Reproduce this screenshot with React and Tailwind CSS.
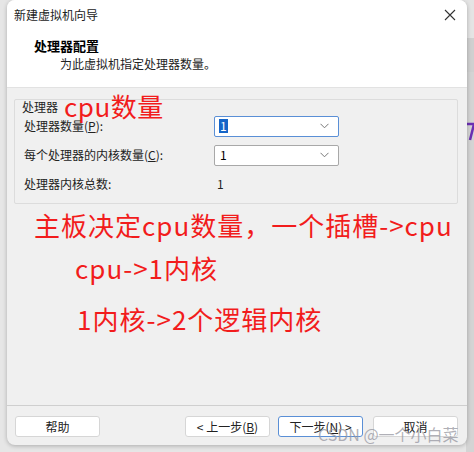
import React from "react";

const F = { fontFamily: '"Noto Sans CJK SC", "Noto Sans", sans-serif' };

function Chevron() {
  return (
    <svg width="9" height="6" viewBox="0 0 9 6" className="text-[#777]">
      <path d="M0.5 0.8 L4.5 4.8 L8.5 0.8" fill="none" stroke="currentColor" strokeWidth="1" />
    </svg>
  );
}

function Select({ focused }) {
  return (
    <div
      className={
        "flex items-center justify-between w-[125px] h-[21px] bg-white rounded-[2px] pl-[4px] pr-[9px] border " +
        (focused ? "border-[#5a8fd6]" : "border-[#a8a8a8]")
      }
    >
      {focused ? (
        <span className="bg-[#1565c8] text-white text-[12px] leading-[14px] px-[1px]">1</span>
      ) : (
        <span className="text-[12px] leading-[14px] text-black px-[1px]">1</span>
      )}
      <Chevron />
    </div>
  );
}

export default function App() {
  const red = "text-[#f21c1c]";
  return (
    <div className="w-[474px] h-[452px] bg-[#e6e6e6] relative overflow-hidden" style={F}>
      {/* right background strip */}
      <div className="absolute right-0 top-0 w-[8px] h-[452px] bg-[#d4d4d4]">
        <div className="h-[38px] bg-[#e4e4e4]" />
        <div className="h-[34px] bg-[#d0d0d0]" />
        <svg width="8" height="20" viewBox="0 0 8 20" className="mt-[50px]">
          <path d="M1 2 H8 M8 2 L4 18" stroke="#6b2fb3" strokeWidth="2.5" fill="none" />
        </svg>
      </div>
      <div className="absolute left-[7px] top-0 w-[460px] h-[445px] bg-[#f0f0f0] rounded-[8px] shadow-[0_1px_4px_rgba(0,0,0,0.25)] flex flex-col overflow-hidden">
        {/* header */}
        <div className="bg-white h-[88px] border-b border-[#e2e2e2] relative">
          <div className="h-[30px] flex items-center justify-between pl-[7px] pr-[11px]">
            <span className="text-[12px] text-[#222]">新建虚拟机向导</span>
            <svg width="12" height="12" viewBox="0 0 12 12">
              <path d="M1 1 L11 11 M11 1 L1 11" stroke="#333" strokeWidth="1.1" />
            </svg>
          </div>
          <div className="pl-[27px] mt-[8px] text-[13px] font-bold leading-[16px] text-black">处理器配置</div>
          <div className="pl-[53px] mt-[2px] text-[12px] leading-[16px] text-[#222]">为此虚拟机指定处理器数量。</div>
        </div>
        {/* body */}
        <div className="flex-1 pt-[11px] px-0 relative">
          <div className="ml-[7px] mr-[9px] border border-[#dcdcdc] rounded-[2px] relative pb-[8px]">
            <div className="h-[13px] leading-[13px] pl-[7px] text-[12px] text-[#222] flex items-center">
              <span>处理器</span>
            </div>
            <div className={"absolute left-[49px] top-[-9px] text-[26px] leading-[30px] tracking-[0.5px] " + red}>cpu数量</div>
            <div className="mt-[2px] flex items-center h-[22px] pl-[9px]">
              <span className="w-[190px] text-[12px] text-[#222]">
                处理器数量(<span className="underline">P</span>):
              </span>
              <Select focused />
            </div>
            <div className="mt-[7px] flex items-center h-[22px] pl-[9px]">
              <span className="w-[190px] text-[12px] text-[#222]">
                每个处理器的内核数量(<span className="underline">C</span>):
              </span>
              <Select />
            </div>
            <div className="mt-[7px] flex items-center h-[22px] pl-[9px]">
              <span className="w-[193px] text-[12px] text-[#222]">处理器内核总数:</span>
              <span className="text-[12px] text-[#222]">1</span>
            </div>
          </div>
          <div className={"mt-[6px] pl-[27px] text-[26px] leading-[30px] tracking-[1px] whitespace-nowrap " + red}>
            主板决定cpu数量，一个插槽-&gt;cpu
          </div>
          <div className={"mt-[13px] pl-[68px] text-[26px] leading-[30px] tracking-[1px] " + red}>cpu-&gt;1内核</div>
          <div className={"mt-[21px] pl-[70px] text-[26px] leading-[30px] tracking-[1px] " + red}>1内核-&gt;2个逻辑内核</div>
        </div>
        {/* footer */}
        <div className="h-[40px] border-t border-[#cfcfcf] flex items-start pt-[10px] pl-[8px]">
          <button className="w-[85px] h-[21px] bg-white border border-[#d6d6d6] rounded-[3px] text-[12px] text-[#222]">帮助</button>
          <button className="ml-[85px] w-[85px] h-[21px] bg-white border border-[#d6d6d6] rounded-[3px] text-[12px] text-[#222]">
            &lt; 上一步(<span className="underline">B</span>)
          </button>
          <button className="ml-[8px] w-[85px] h-[21px] bg-white border border-[#5a8fd6] rounded-[3px] text-[12px] text-[#222]">
            下一步(<span className="underline">N</span>) &gt;
          </button>
          <button className="ml-[10px] w-[85px] h-[21px] bg-white border border-[#d6d6d6] rounded-[3px] text-[12px] text-[#222]">取消</button>
        </div>
      </div>
      {/* watermark */}
      <div className="absolute left-[318px] top-[424px] text-[16px] leading-[20px] text-[rgba(150,150,160,0.75)] whitespace-nowrap">
        CSDN @一个小白菜
      </div>
    </div>
  );
}
